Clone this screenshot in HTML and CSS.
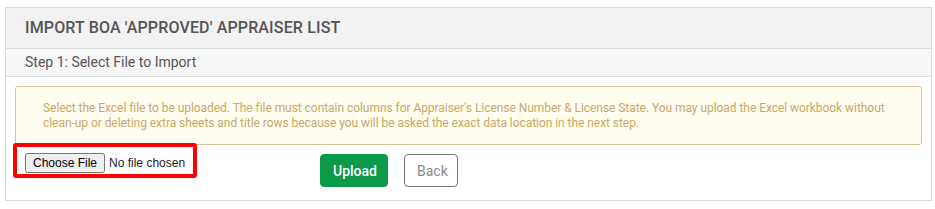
FILE: index.html
```html
<!DOCTYPE html>
<html lang="en">
<head>
    <meta charset="UTF-8">
    <title>Import BOA Approved Appraiser List</title>
    <link rel="stylesheet" href="styles.css">
</head>
<body>
    <div class="panel">
        <!-- Titulo del panel -->
        <div class="panel-title">IMPORT BOA 'APPROVED' APPRAISER LIST</div>
        <div class="panel-step">Step 1: Select File to Import</div>

        <div class="panel-body">
            <div class="alert">
                Select the Excel file to be uploaded. The file must contain columns for Appraiser's License Number &amp; License State. You may upload the Excel workbook without clean-up or deleting extra sheets and title rows because you will be asked the exact data location in the next step.
            </div>

            <div class="form-row">
                <div class="file-box">
                    <input type="file" class="file-input">
                </div>
                <div class="actions">
                    <button class="btn btn-upload">Upload</button>
                    <button class="btn btn-back">Back</button>
                </div>
            </div>
        </div>
    </div>
</body>
</html>
```

FILE: styles.css
```css
body {
    margin: 0;
    padding: 7px 3px 0 5px;
    font-family: 'Roboto', 'Liberation Sans', sans-serif;
    background-color: #fff;
}

.panel {
    width: 925px;
    border: 1px solid #d9dcdc;
}

.panel-title {
    height: 40px;
    line-height: 40px;
    padding-left: 19px;
    background-color: #f2f2f2;
    border-bottom: 1px solid #d9dcdc;
    color: #555;
    font-size: 16px;
    font-weight: 500;
    letter-spacing: 0.15px;
}

.panel-step {
    height: 27px;
    line-height: 27px;
    padding-left: 19px;
    background-color: #f7f7f7;
    border-bottom: 1px solid #d9dcdc;
    color: #555;
    font-size: 14px;
}

.panel-body {
    padding: 9px 9px 13px 9px;
}

/* Caja de aviso amarilla */
.alert {
    padding: 14px 18px 13px 27px;
    background-color: #fefdf0;
    border: 1px solid #d8c49c;
    border-radius: 3px;
    color: #c9a86a;
    font-size: 12px;
    line-height: 15px;
    letter-spacing: -0.05px;
}

.form-row {
    display: flex;
    align-items: flex-start;
    margin-top: -2px;
    margin-left: -2px;
}

/* Recuadro rojo alrededor del input */
.file-box {
    width: 168px;
    height: 21px;
    padding: 6px 0 0 8px;
    border: 4px solid #ff0000;
    border-radius: 3px;
    background-color: #fff;
    overflow: hidden;
}

.file-input {
    display: block;
    font-family: 'Liberation Sans', Arial, sans-serif;
    font-size: 12px;
    color: #222;
}

.actions {
    display: flex;
    gap: 16px;
    margin-top: 11px;
    margin-left: 123px;
}

.btn {
    height: 33px;
    padding: 0 12px;
    border-radius: 4px;
    font-family: 'Roboto', 'Liberation Sans', sans-serif;
    font-size: 14px;
    cursor: pointer;
}

.btn-upload {
    width: 68px;
    background-color: #0a9a48;
    border: 1px solid #0a9a48;
    color: #fff;
    font-weight: 500;
}

.btn-back {
    width: 54px;
    background-color: #fff;
    border: 1px solid #777;
    color: #888;
}
```
